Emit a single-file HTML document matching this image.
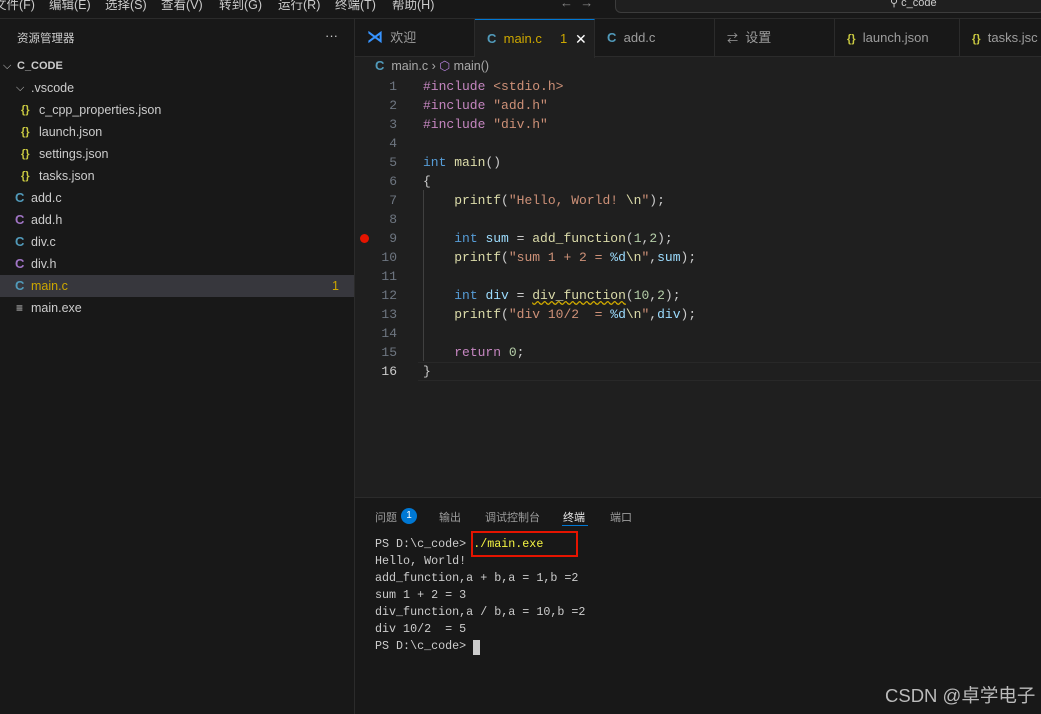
<!DOCTYPE html>
<html><head><meta charset="utf-8"><style>
*{margin:0;padding:0;box-sizing:border-box}
body{width:1041px;height:714px;overflow:hidden;background:#1f1f1f;font-family:"Liberation Sans","Noto Sans CJK SC",sans-serif;color:#ccc;position:relative}
.a{position:absolute;white-space:pre}
.mono{font-family:"Liberation Mono","Noto Sans CJK SC",monospace}
#title{left:0;top:0;width:1041px;height:19px;background:#181818;border-bottom:1px solid #2b2b2b}
.m{position:absolute;top:-6px;font-size:12.5px;color:#ccc;white-space:pre}
#side{left:0;top:19px;width:355px;height:695px;background:#181818;border-right:1px solid #2b2b2b}
.f{position:absolute;left:0;width:354px;height:22px;font-size:12.5px;line-height:22px;color:#ccc}
.ci{color:#519aba;font-weight:bold;font-size:13px}
.hi{color:#a074c4;font-weight:bold;font-size:13px}
.ji{color:#cbcb41;font-weight:bold;font-size:11px}
#tabs{left:355px;top:19px;width:686px;height:38px;background:#181818;border-bottom:1px solid #2b2b2b}
.t{position:absolute;top:19px;height:38px;line-height:38px;font-size:13px;color:#9d9d9d;border-right:1px solid #2b2b2b;padding-left:12px;white-space:pre}
.ln{position:absolute;width:42px;text-align:right;left:355px;font-size:13px;color:#6e7681;line-height:19px}
.cl{position:absolute;left:423px;font-size:13px;line-height:19px;color:#ccc;white-space:pre}
.k{color:#569cd6}.p{color:#c586c0}.s{color:#ce9178}.fn{color:#dcdcaa}.v{color:#9cdcfe}.n{color:#b5cea8}
#panel{left:355px;top:497px;width:686px;height:217px;background:#181818;border-top:1px solid #2b2b2b}
.tl{position:absolute;left:375px;font-size:11.7px;line-height:17px;color:#ccc;white-space:pre}
</style></head><body>
<div id="title" class="a"></div>
<div class="m" style="left:-6px">文件(F)</div>
<div class="m" style="left:49px">编辑(E)</div>
<div class="m" style="left:105px">选择(S)</div>
<div class="m" style="left:161px">查看(V)</div>
<div class="m" style="left:219px">转到(G)</div>
<div class="m" style="left:278px">运行(R)</div>
<div class="m" style="left:335px">终端(T)</div>
<div class="m" style="left:392px">帮助(H)</div>
<div class="a" style="left:560px;top:-5px;font-size:13px;color:#888">←&nbsp;&nbsp;→</div>
<div class="a" style="left:615px;top:-10px;width:430px;height:23px;border:1px solid #3c3c3c;border-radius:6px;background:#1f1f1f"></div>
<div class="a" style="left:890px;top:-4px;font-size:11px;color:#ccc">⚲ c_code</div>

<div id="side" class="a"></div>
<div class="a" style="left:17px;top:30px;font-size:11.5px;color:#ccc">资源管理器</div>
<div class="a" style="left:325px;top:28px;font-size:13px;color:#ccc">···</div>
<div class="f" style="top:55px"><span class="a" style="left:3px;color:#ccc;font-size:11px">⌵</span><span class="a" style="left:17px;font-weight:bold;font-size:11px">C_CODE</span></div>
<div class="f" style="top:77px"><span class="a" style="left:16px;font-size:11px">⌵</span><span class="a" style="left:31px">.vscode</span></div>
<div class="f" style="top:99px"><span class="a ji" style="left:21px">{}</span><span class="a" style="left:39px">c_cpp_properties.json</span></div>
<div class="f" style="top:121px"><span class="a ji" style="left:21px">{}</span><span class="a" style="left:39px">launch.json</span></div>
<div class="f" style="top:143px"><span class="a ji" style="left:21px">{}</span><span class="a" style="left:39px">settings.json</span></div>
<div class="f" style="top:165px"><span class="a ji" style="left:21px">{}</span><span class="a" style="left:39px">tasks.json</span></div>
<div class="f" style="top:187px"><span class="a ci" style="left:15px">C</span><span class="a" style="left:31px">add.c</span></div>
<div class="f" style="top:209px"><span class="a hi" style="left:15px">C</span><span class="a" style="left:31px">add.h</span></div>
<div class="f" style="top:231px"><span class="a ci" style="left:15px">C</span><span class="a" style="left:31px">div.c</span></div>
<div class="f" style="top:253px"><span class="a hi" style="left:15px">C</span><span class="a" style="left:31px">div.h</span></div>
<div class="f" style="top:275px;background:#37373d"><span class="a ci" style="left:15px">C</span><span class="a" style="left:31px;color:#cca700">main.c</span><span class="a" style="left:332px;color:#cca700">1</span></div>
<div class="f" style="top:297px"><span class="a" style="left:16px;color:#ccc;font-size:12px">≡</span><span class="a" style="left:31px">main.exe</span></div>

<div id="tabs" class="a"></div>
<div class="t" style="left:355px;width:120px"><span style="color:#3794ff;font-weight:bold;font-size:16px">⋊</span>  欢迎</div>
<div class="t" style="left:475px;width:120px;background:#1f1f1f;border-top:1px solid #0078d4;height:39px;color:#cca700"><span class="ci">C</span>  main.c<span class="a" style="left:85px">1</span><span class="a" style="left:100px;color:#fff;font-size:14px">✕</span></div>
<div class="t" style="left:595px;width:120px"><span class="ci">C</span>  add.c</div>
<div class="t" style="left:715px;width:120px"><span style="font-size:11px">⇄</span>  设置</div>
<div class="t" style="left:835px;width:125px"><span class="ji">{}</span>  launch.json</div>
<div class="t" style="left:960px;width:90px"><span class="ji">{}</span>  tasks.jsc</div>

<div class="a" style="left:375px;top:58px;font-size:12.5px;color:#a9a9a9"><span class="ci">C</span>  main.c › <span style="color:#b180d7">⬡</span> main()</div>

<div class="ln mono" style="top:77px">1<br>2<br>3<br>4<br>5<br>6<br>7<br>8<br>9<br>10<br>11<br>12<br>13<br>14<br>15<br><span style="color:#ccc">16</span></div>
<div class="a" style="left:360px;top:234px;width:9px;height:9px;border-radius:50%;background:#e51400"></div>
<div class="a" style="left:423px;top:190px;width:1px;height:171px;background:#404040"></div>
<div class="a" style="left:418px;top:362px;width:623px;height:19px;border-top:1px solid #282828;border-bottom:1px solid #282828"></div>
<div class="cl mono" style="top:77px"><span class="p">#include</span> <span class="s">&lt;stdio.h&gt;</span>
<span class="p">#include</span> <span class="s">"add.h"</span>
<span class="p">#include</span> <span class="s">"div.h"</span>

<span class="k">int</span> <span class="fn">main</span>()
{
    <span class="fn">printf</span>(<span class="s">"Hello, World! </span><span class="fn">\n</span><span class="s">"</span>);

    <span class="k">int</span> <span class="v">sum</span> = <span class="fn">add_function</span>(<span class="n">1</span>,<span class="n">2</span>);
    <span class="fn">printf</span>(<span class="s">"sum 1 + 2 = </span><span class="v">%d</span><span class="fn">\n</span><span class="s">"</span>,<span class="v">sum</span>);

    <span class="k">int</span> <span class="v">div</span> = <span class="fn" style="text-decoration:underline wavy #cca700">div_function</span>(<span class="n">10</span>,<span class="n">2</span>);
    <span class="fn">printf</span>(<span class="s">"div 10/2  = </span><span class="v">%d</span><span class="fn">\n</span><span class="s">"</span>,<span class="v">div</span>);

    <span class="p">return</span> <span class="n">0</span>;
}</div>

<div id="panel" class="a"></div>
<div class="a" style="left:375px;top:509px;font-size:11px;color:#9d9d9d">问题</div>
<div class="a" style="left:401px;top:508px;width:16px;height:16px;border-radius:50%;background:#0078d4;color:#fff;font-size:10px;text-align:center;line-height:16px">1</div>
<div class="a" style="left:439px;top:509px;font-size:11px;color:#9d9d9d">输出</div>
<div class="a" style="left:485px;top:509px;font-size:11px;color:#9d9d9d">调试控制台</div>
<div class="a" style="left:563px;top:509px;font-size:11px;color:#e7e7e7">终端</div>
<div class="a" style="left:562px;top:525px;width:26px;height:1px;background:#0078d4"></div>
<div class="a" style="left:610px;top:509px;font-size:11px;color:#9d9d9d">端口</div>
<div class="tl mono" style="top:536px">PS D:\c_code&gt; <span style="color:#f5f543">./main.exe</span>
Hello, World!
add_function,a + b,a = 1,b =2
sum 1 + 2 = 3
div_function,a / b,a = 10,b =2
div 10/2  = 5
PS D:\c_code&gt; </div>
<div class="a" style="left:473px;top:640px;width:7px;height:15px;background:#ccc"></div>
<div class="a" style="left:471px;top:531px;width:107px;height:26px;border:2px solid #e51400"></div>
<div class="a" style="left:885px;top:682px;font-size:18.5px;color:#bbb">CSDN @卓学电子</div>
</body></html>
